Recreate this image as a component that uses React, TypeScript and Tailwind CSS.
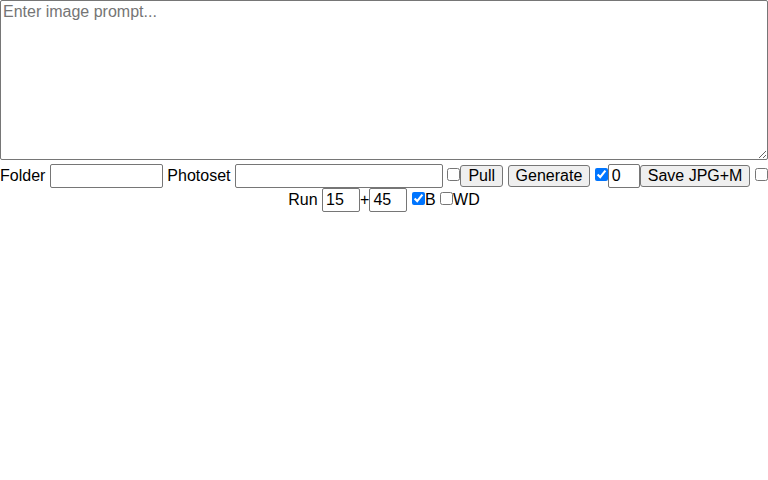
import React from 'react';

const inputCls =
  "border border-[#767676] rounded-[2px] px-[3px] py-[2px] bg-white text-black text-left align-baseline";
const buttonCls =
  "border border-[#767676] rounded-[3px] px-[7px] py-[1px] bg-[#efefef] text-black align-baseline";
const checkCls = "m-0 w-[13px] h-[13px] align-baseline";

export default function App() {
  return (
    <div className="text-center font-['Liberation_Sans',Arial,sans-serif] text-[16px] leading-[normal] text-black bg-white min-h-[480px]">
      <textarea
        placeholder="Enter image prompt..."
        className="w-full h-[160px] border border-[#767676] rounded-[2px] p-[2px] text-left resize align-baseline placeholder:text-[#757575]"
      />
      Folder{" "}
      <input type="text" className={`${inputCls} w-[113px]`} />
      {" "}Photoset{" "}
      <input type="text" className={`${inputCls} w-[208px]`} />
      {" "}
      <input type="checkbox" className={checkCls} />
      <button className={buttonCls}>Pull</button>
      {" "}
      <button className={buttonCls}>Generate</button>
      {" "}
      <input type="checkbox" defaultChecked className={checkCls} />
      <input type="text" defaultValue="0" className={`${inputCls} w-[32px]`} />
      <button className={buttonCls}>Save JPG+M</button>
      {" "}
      <input type="checkbox" className={checkCls} />
      {" "}Run{" "}
      <input type="text" defaultValue="15" className={`${inputCls} w-[38px]`} />
      +
      <input type="text" defaultValue="45" className={`${inputCls} w-[38px]`} />
      {" "}
      <input type="checkbox" defaultChecked className={checkCls} />
      B{" "}
      <input type="checkbox" className={checkCls} />
      WD
    </div>
  );
}
